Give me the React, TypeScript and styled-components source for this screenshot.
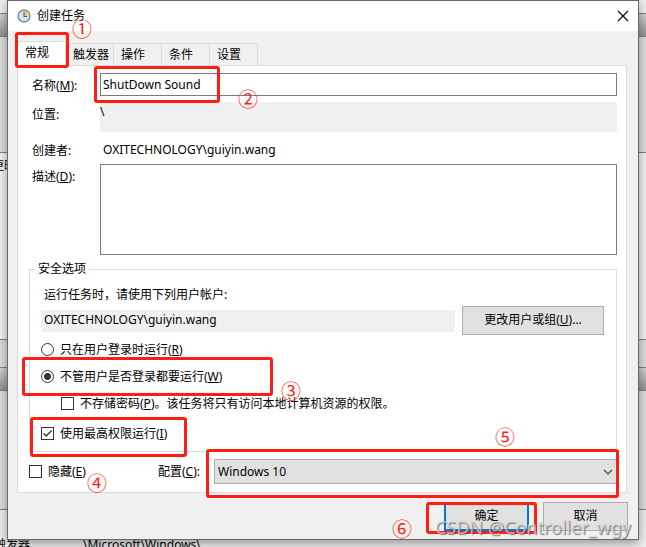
import React from "react";
import styled, { createGlobalStyle, css } from "styled-components";

const RED = "#ff1f12";
const LINE = "#dcdcdc";
const FACE = "#f0f0f0";

const GlobalStyle = createGlobalStyle`
  *, *::before, *::after { box-sizing: border-box; }
  body {
    margin: 0;
    overflow: hidden;
    background: #e8e8e8;
    color: #000;
    font: 12px/18px "Noto Sans", "Noto Sans CJK SC", sans-serif;
  }
  button, input, select, textarea { font: inherit; color: inherit; margin: 0; }
`;

const Desktop = styled.div`
  position: relative;
  display: grid;
  grid-template-columns: minmax(0, 1fr);
  height: 100vh;
  min-height: 547px;
  overflow: hidden;
`;

/* Parent window, visible around the edges of the dialog */
const ParentWindow = styled.div`
  grid-area: 1 / 1;
  display: flex;
  flex-direction: column;
  overflow: hidden;
`;

const Band = styled.div<{ $h: number; $tone: "light" | "mid" | "pale" | "header" }>`
  flex: none;
  height: ${(p) => p.$h}px;
  overflow: hidden;
  white-space: nowrap;
  border-bottom: 1px solid #7d8388;
  background: ${(p) =>
    ({
      light: "#f0f0f0",
      mid: "#dedede",
      pale: "#f3f3f3",
      header: "linear-gradient(#d2d2d2, #929292)",
    })[p.$tone]};
`;

const ClippedText = styled.div`
  margin: 4px 0 0 -8px;
`;

const StatusBand = styled.div`
  flex: 1;
  display: grid;
  grid-template-columns: 89px 1fr;
  align-items: start;
  padding-top: 26px;
  margin-left: -6px;
  background: #efefef;
  white-space: nowrap;
`;

const DialogWindow = styled.form`
  grid-area: 1 / 1;
  align-self: start;
  display: flex;
  flex-direction: column;
  margin: 0 7px;
  border: 1px solid #68686a;
  background: ${FACE};
  box-shadow: 0 3px 10px rgba(0, 0, 0, 0.4);
  z-index: 1;
`;

const TitleBar = styled.header`
  display: flex;
  align-items: center;
  gap: 6px;
  height: 30px;
  padding: 0 8px 0 9px;
  background: #fff;
`;

const Title = styled.h1`
  flex: 1;
  margin: 0;
  font-size: 12px;
  font-weight: 400;
`;

const CloseButton = styled.button`
  display: flex;
  padding: 1px;
  border: 0;
  background: none;
`;

const TabList = styled.div`
  display: flex;
  align-items: flex-end;
  height: 24px;
  margin: 10px 11px 0 9px;
`;

const Tab = styled.button<{ $active?: boolean }>`
  height: 22px;
  width: 48px;
  padding: 0 0 0 7px;
  border: 1px solid ${LINE};
  border-width: 1px 1px 0 0;
  background: ${FACE};
  text-align: left;
  white-space: nowrap;
  ${(p) =>
    p.$active &&
    css`
      height: 25px;
      width: 49px;
      padding: 0 0 3px 7px;
      border-left-width: 1px;
      background: #fff;
      margin-bottom: -1px;
      z-index: 1;
    `}
`;

const Panel = styled.div`
  margin: 0 11px 0 9px;
  padding: 7px 9px 7px 11px;
  border: 1px solid ${LINE};
  background: #fff;
`;

const FieldGrid = styled.div`
  display: grid;
  grid-template-columns: 68px minmax(0, 1fr);
  row-gap: 6px;
  padding-left: 3px;
`;

const FieldLabel = styled.label`
  height: 20px;
  padding-top: 3px;
  line-height: 20px;
`;

const TextInput = styled.input`
  height: 23px;
  width: 100%;
  padding: 0 2px;
  border: 1px solid #7a7a7a;
  border-radius: 0;
  background: #fff;
  outline: none;
`;

const ReadOnlyBlock = styled.output`
  height: 30px;
  padding-top: 1px;
  background: ${FACE};
`;

const PlainValue = styled.output`
  height: 20px;
  padding: 3px;
`;

const Description = styled.textarea`
  display: block;
  height: 91px;
  width: 100%;
  padding: 3px;
  border: 1px solid #7a7a7a;
  border-radius: 0;
  resize: none;
  outline: none;
`;

const SecurityGroup = styled.fieldset`
  min-width: 0;
  margin: 5px 0 0;
  padding: 8px 12px 4px 11px;
  border: 1px solid ${LINE};
`;

const Legend = styled.legend`
  margin-left: -5px;
  padding: 0 3px 0 2px;
`;

const Hint = styled.p`
  margin: 0 0 2px 3px;
`;

const AccountRow = styled.div`
  display: flex;
  align-items: center;
  gap: 7px;
  margin-bottom: 1px;
`;

const AccountName = styled.output`
  flex: 1;
  height: 22px;
  padding: 1px 3px 0;
  background: ${FACE};
`;

const PushButton = styled.button<{ $w: number; $default?: boolean }>`
  width: ${(p) => p.$w}px;
  height: 29px;
  padding: 0 0 1px;
  border: ${(p) => (p.$default ? "2px solid #0078d7" : "1px solid #adadad")};
  background: #e1e1e1;
  white-space: nowrap;
`;

const Choice = styled.label<{ $indent?: boolean }>`
  display: flex;
  align-items: center;
  gap: 6px;
  height: 27px;
  margin-left: ${(p) => (p.$indent ? 20 : 0)}px;
  white-space: nowrap;
`;

const Radio = styled.input.attrs({ type: "radio" })`
  appearance: none;
  width: 13px;
  height: 13px;
  border: 1px solid #333;
  border-radius: 50%;
  background: #fff;
  &:checked {
    background: radial-gradient(circle, #333 0 3px, #fff 4px);
  }
`;

const TickFrame = styled.span`
  display: grid;
  width: 13px;
  height: 13px;
  > * { grid-area: 1 / 1; }
  svg { pointer-events: none; visibility: hidden; }
  input:checked + svg { visibility: visible; }
`;

const Tick = styled.input.attrs({ type: "checkbox" })`
  appearance: none;
  width: 13px;
  height: 13px;
  border: 1px solid #333;
  background: #fff;
`;

const OptionsSpacer = styled.div`
  height: 3px;
`;

const ConfigRow = styled.div`
  display: grid;
  grid-template-columns: 129px 56px minmax(0, 1fr);
  align-items: center;
  margin-top: 6px;
`;

const SelectFrame = styled.div`
  display: grid;
  align-items: center;
  > * { grid-area: 1 / 1; }
  svg { justify-self: end; margin-right: 4px; pointer-events: none; }
`;

const Select = styled.select`
  appearance: none;
  width: 100%;
  height: 25px;
  padding: 0 3px;
  border: 1px solid #adadad;
  border-radius: 0;
  background: #e1e1e1;
`;

const Footer = styled.footer`
  display: flex;
  justify-content: flex-end;
  gap: 14px;
  padding: 9px 10px 8px;
`;

/* Tutorial marks drawn over the dialog */
const Frame = styled.div<{ $x?: number; $r?: number; $y: number; $w?: number; $h: number }>`
  position: absolute;
  z-index: 2;
  left: ${(p) => (p.$x === undefined ? "auto" : `${p.$x}px`)};
  right: ${(p) => (p.$r === undefined ? "auto" : `${p.$r}px`)};
  top: ${(p) => p.$y}px;
  width: ${(p) => (p.$w === undefined ? "auto" : `${p.$w}px`)};
  height: ${(p) => p.$h}px;
  border: 3px solid ${RED};
  border-radius: 3px;
  pointer-events: none;
`;

const Step = styled.span<{ $x?: number; $r?: number; $y: number }>`
  position: absolute;
  z-index: 2;
  left: ${(p) => (p.$x === undefined ? "auto" : `${p.$x}px`)};
  right: ${(p) => (p.$r === undefined ? "auto" : `${p.$r}px`)};
  top: ${(p) => p.$y}px;
  width: 20px;
  color: ${RED};
  font: 20px/20px "Noto Sans CJK SC", sans-serif;
  pointer-events: none;
`;

const Watermark = styled.div`
  position: absolute;
  z-index: 3;
  right: 15px;
  top: 515px;
  color: rgba(225, 225, 225, 0.7);
  font: 18px/24px "Noto Sans", sans-serif;
  text-shadow: 1px 1px 1px rgba(70, 70, 70, 0.7);
  white-space: nowrap;
  pointer-events: none;
`;

function ClockIcon() {
  return (
    <svg width="14" height="14" viewBox="0 0 14 14" aria-hidden="true">
      <circle cx="7" cy="7" r="6" fill="#dbe7f2" stroke="#85878a" strokeWidth="1.4" />
      <path d="M7 7V2.2A4.8 4.8 0 0 1 11.8 7Z" fill="#f0c978" />
      <path d="M7 2.8V7.5H10.4" fill="none" stroke="#4e5b69" strokeWidth="1.1" />
      <path d="M2.2 7h1M7 10.8v1M3.8 3.8l.5.5M3.8 10.2l.5-.5M10.2 10.2l-.5-.5" stroke="#8ba0b3" strokeWidth=".8" />
    </svg>
  );
}

function CheckOption({ id, checked, indent, children }: {
  id: string;
  checked?: boolean;
  indent?: boolean;
  children: React.ReactNode;
}) {
  return (
    <Choice htmlFor={id} $indent={indent}>
      <TickFrame>
        <Tick id={id} defaultChecked={checked} />
        <svg width="13" height="13" viewBox="0 0 13 13" aria-hidden="true">
          <path d="M2.5 6.3L5.2 9L10.7 3.5" fill="none" stroke="#333" strokeWidth="1.3" />
        </svg>
      </TickFrame>
      <span>{children}</span>
    </Choice>
  );
}

export default function App() {
  return (
    <Desktop>
      <GlobalStyle />
      <ParentWindow>
        <Band $h={14} $tone="light" />
        <Band $h={23} $tone="header" />
        <Band $h={116} $tone="mid" />
        <Band $h={187} $tone="pale">
          <ClippedText>更时</ClippedText>
        </Band>
        <Band $h={28} $tone="mid" />
        <Band $h={23} $tone="header" />
        <Band $h={119} $tone="mid" />
        <StatusBand>
          <span>触发器</span>
          <span>\Microsoft\Windows\</span>
        </StatusBand>
      </ParentWindow>

      <DialogWindow onSubmit={(e) => e.preventDefault()}>
        <TitleBar>
          <ClockIcon />
          <Title>创建任务</Title>
          <CloseButton type="button" aria-label="关闭">
            <svg width="12" height="12" viewBox="0 0 12 12" aria-hidden="true">
              <path d="M1 1L11 11M11 1L1 11" stroke="#000" strokeWidth="1.1" />
            </svg>
          </CloseButton>
        </TitleBar>

        <TabList role="tablist">
          <Tab type="button" role="tab" aria-selected="true" $active>常规</Tab>
          <Tab type="button" role="tab">触发器</Tab>
          <Tab type="button" role="tab">操作</Tab>
          <Tab type="button" role="tab">条件</Tab>
          <Tab type="button" role="tab">设置</Tab>
        </TabList>

        <Panel role="tabpanel">
          <FieldGrid>
            <FieldLabel htmlFor="name">名称(<u>M</u>):</FieldLabel>
            <TextInput id="name" defaultValue="ShutDown Sound" />
            <FieldLabel htmlFor="location">位置:</FieldLabel>
            <ReadOnlyBlock id="location">\</ReadOnlyBlock>
            <FieldLabel htmlFor="author">创建者:</FieldLabel>
            <PlainValue id="author">OXITECHNOLOGY\guiyin.wang</PlainValue>
            <FieldLabel htmlFor="description">描述(<u>D</u>):</FieldLabel>
            <Description id="description" />
          </FieldGrid>

          <SecurityGroup>
            <Legend>安全选项</Legend>
            <Hint>运行任务时，请使用下列用户帐户:</Hint>
            <AccountRow>
              <AccountName>OXITECHNOLOGY\guiyin.wang</AccountName>
              <PushButton type="button" $w={142}>更改用户或组(<u>U</u>)...</PushButton>
            </AccountRow>
            <Choice>
              <Radio name="logon" />
              <span>只在用户登录时运行(<u>R</u>)</span>
            </Choice>
            <Choice>
              <Radio name="logon" defaultChecked />
              <span>不管用户是否登录都要运行(<u>W</u>)</span>
            </Choice>
            <CheckOption id="no-password" indent>
              不存储密码(<u>P</u>)。该任务将只有访问本地计算机资源的权限。
            </CheckOption>
            <OptionsSpacer />
            <CheckOption id="highest" checked>使用最高权限运行(<u>I</u>)</CheckOption>
          </SecurityGroup>

          <ConfigRow>
            <CheckOption id="hidden">隐藏(<u>E</u>)</CheckOption>
            <label htmlFor="config">配置(<u>C</u>):</label>
            <SelectFrame>
              <Select id="config" defaultValue="win10">
                <option value="win10">Windows 10</option>
              </Select>
              <svg width="10" height="6" viewBox="0 0 10 6" aria-hidden="true">
                <path d="M1 1L5 5L9 1" fill="none" stroke="#444" strokeWidth="1.2" />
              </svg>
            </SelectFrame>
          </ConfigRow>
        </Panel>

        <Footer>
          <PushButton type="submit" $w={85} $default>确定</PushButton>
          <PushButton type="button" $w={85}>取消</PushButton>
        </Footer>
      </DialogWindow>

      <Frame $x={15} $y={32} $w={54} $h={36} />
      <Frame $x={94} $y={66} $w={126} $h={37} />
      <Frame $x={22} $y={357} $w={251} $h={39} />
      <Frame $x={30} $y={417} $w={157} $h={40} />
      <Frame $x={206} $r={27} $y={449} $h={49} />
      <Frame $r={109} $y={502} $w={111} $h={32} />
      <Step $x={72} $y={19}>①</Step>
      <Step $x={238} $y={89}>②</Step>
      <Step $x={281} $y={381}>③</Step>
      <Step $x={87} $y={473}>④</Step>
      <Step $r={131} $y={427}>⑤</Step>
      <Step $r={234} $y={519}>⑥</Step>
      <Watermark>CSDN @Controller_wgy</Watermark>
    </Desktop>
  );
}
